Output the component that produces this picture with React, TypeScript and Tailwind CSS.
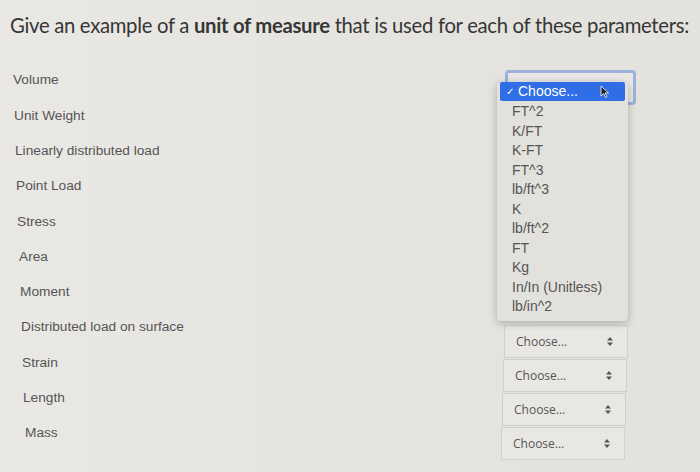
import React from "react";

const labels = [
  { text: "Volume", pad: "pl-[13px]" },
  { text: "Unit Weight", pad: "pl-[14px]" },
  { text: "Linearly distributed load", pad: "pl-[15px]" },
  { text: "Point Load", pad: "pl-[16px]" },
  { text: "Stress", pad: "pl-[17px]" },
  { text: "Area", pad: "pl-[19px]" },
  { text: "Moment", pad: "pl-[20px]" },
  { text: "Distributed load on surface", pad: "pl-[21px]" },
  { text: "Strain", pad: "pl-[22px]" },
  { text: "Length", pad: "pl-[23px]" },
  { text: "Mass", pad: "pl-[25px]" },
];

const options = [
  "FT^2",
  "K/FT",
  "K-FT",
  "FT^3",
  "lb/ft^3",
  "K",
  "lb/ft^2",
  "FT",
  "Kg",
  "In/In (Unitless)",
  "lb/in^2",
];

function Arrows() {
  return (
    <svg width="6" height="9" viewBox="0 0 6 9" className="text-[#555]">
      <path d="M3 0 L6 3.5 H0 Z" fill="currentColor" />
      <path d="M3 9 L6 5.5 H0 Z" fill="currentColor" />
    </svg>
  );
}

function Select({ shift }: { shift: string }) {
  return (
    <div className={`h-[33px] w-[124px] ${shift} flex items-center justify-between border border-[#d2d0cb] bg-[#e8e7e3] pl-[11px] pr-[14px]`}>
      <span className="text-[12px] text-[#555] [font-family:'Open_Sans',sans-serif]">Choose...</span>
      <Arrows />
    </div>
  );
}

export default function App() {
  const shifts = ["ml-[4px]", "ml-[3px]", "ml-[2px]", "ml-[1px]"];
  return (
    <div className="relative h-[472px] w-[700px] overflow-hidden bg-gradient-to-r from-[#e9e8e4] via-[#e5e4df] to-[#e3e2dd] [font-family:'Liberation_Sans',Arial,sans-serif]">
      <h1 className="whitespace-nowrap pl-[10px] pt-[11px] text-[20.3px] leading-[28px] tracking-[-0.3px] text-[#363636] [font-family:Lato,sans-serif]">
        Give an example of a <b className="font-bold">unit of measure</b> that is used for each of these parameters:
      </h1>

      <div className="mt-[24px] flex">
        <div className="flex w-[500px] flex-col">
          {labels.map((l) => (
            <div key={l.text} className={`flex h-[35.3px] items-center ${l.pad} text-[13.7px] text-[#555]`}>
              {l.text}
            </div>
          ))}
        </div>
      </div>

      <div className="absolute left-[500px] top-[325px] flex flex-col gap-[1px]">
        {shifts.map((s, i) => (
          <Select key={i} shift={s} />
        ))}
      </div>

      {/* selects hidden behind the open menu */}
      <div className="absolute left-[502px] top-[106px] flex flex-col gap-[2px]">
        {[0, 1, 2, 3, 4, 5].map((i) => (
          <div key={i} className="h-[34px] w-[126px] border border-[#d2d0cb] bg-[#e8e7e3]" />
        ))}
      </div>

      {/* focused select */}
      <div className="absolute left-[505px] top-[70px] h-[35px] w-[131px] rounded-[4px] border-[3px] border-[#9bb3dc] bg-[#e8e7e3]" />

      {/* open menu */}
      <div className="absolute left-[497px] top-[82px] w-[131px] rounded-[4px] bg-[#e2e1dc] pb-[4px] shadow-[0_2px_8px_rgba(0,0,0,0.25)]">
        <div className="mx-[3px] flex h-[19px] items-center gap-[4px] rounded-[2px] bg-[#2f6ee6] pl-[6px] text-[14px] text-white">
          <span className="text-[10px]">✓</span>
          <span>Choose...</span>
          <svg width="10" height="13" viewBox="0 0 10 13" className="ml-[18px]">
            <path d="M1 1 L1 11 L3.5 8.5 L5.5 12.5 L7 11.8 L5 8 L8.5 8 Z" fill="#222" stroke="#fff" strokeWidth="0.8" />
          </svg>
        </div>
        <div className="flex flex-col pl-[15px] pt-[1px]">
          {options.map((o) => (
            <div key={o} className="flex h-[19.5px] items-center text-[14px] text-[#555]">
              {o}
            </div>
          ))}
        </div>
      </div>
    </div>
  );
}
